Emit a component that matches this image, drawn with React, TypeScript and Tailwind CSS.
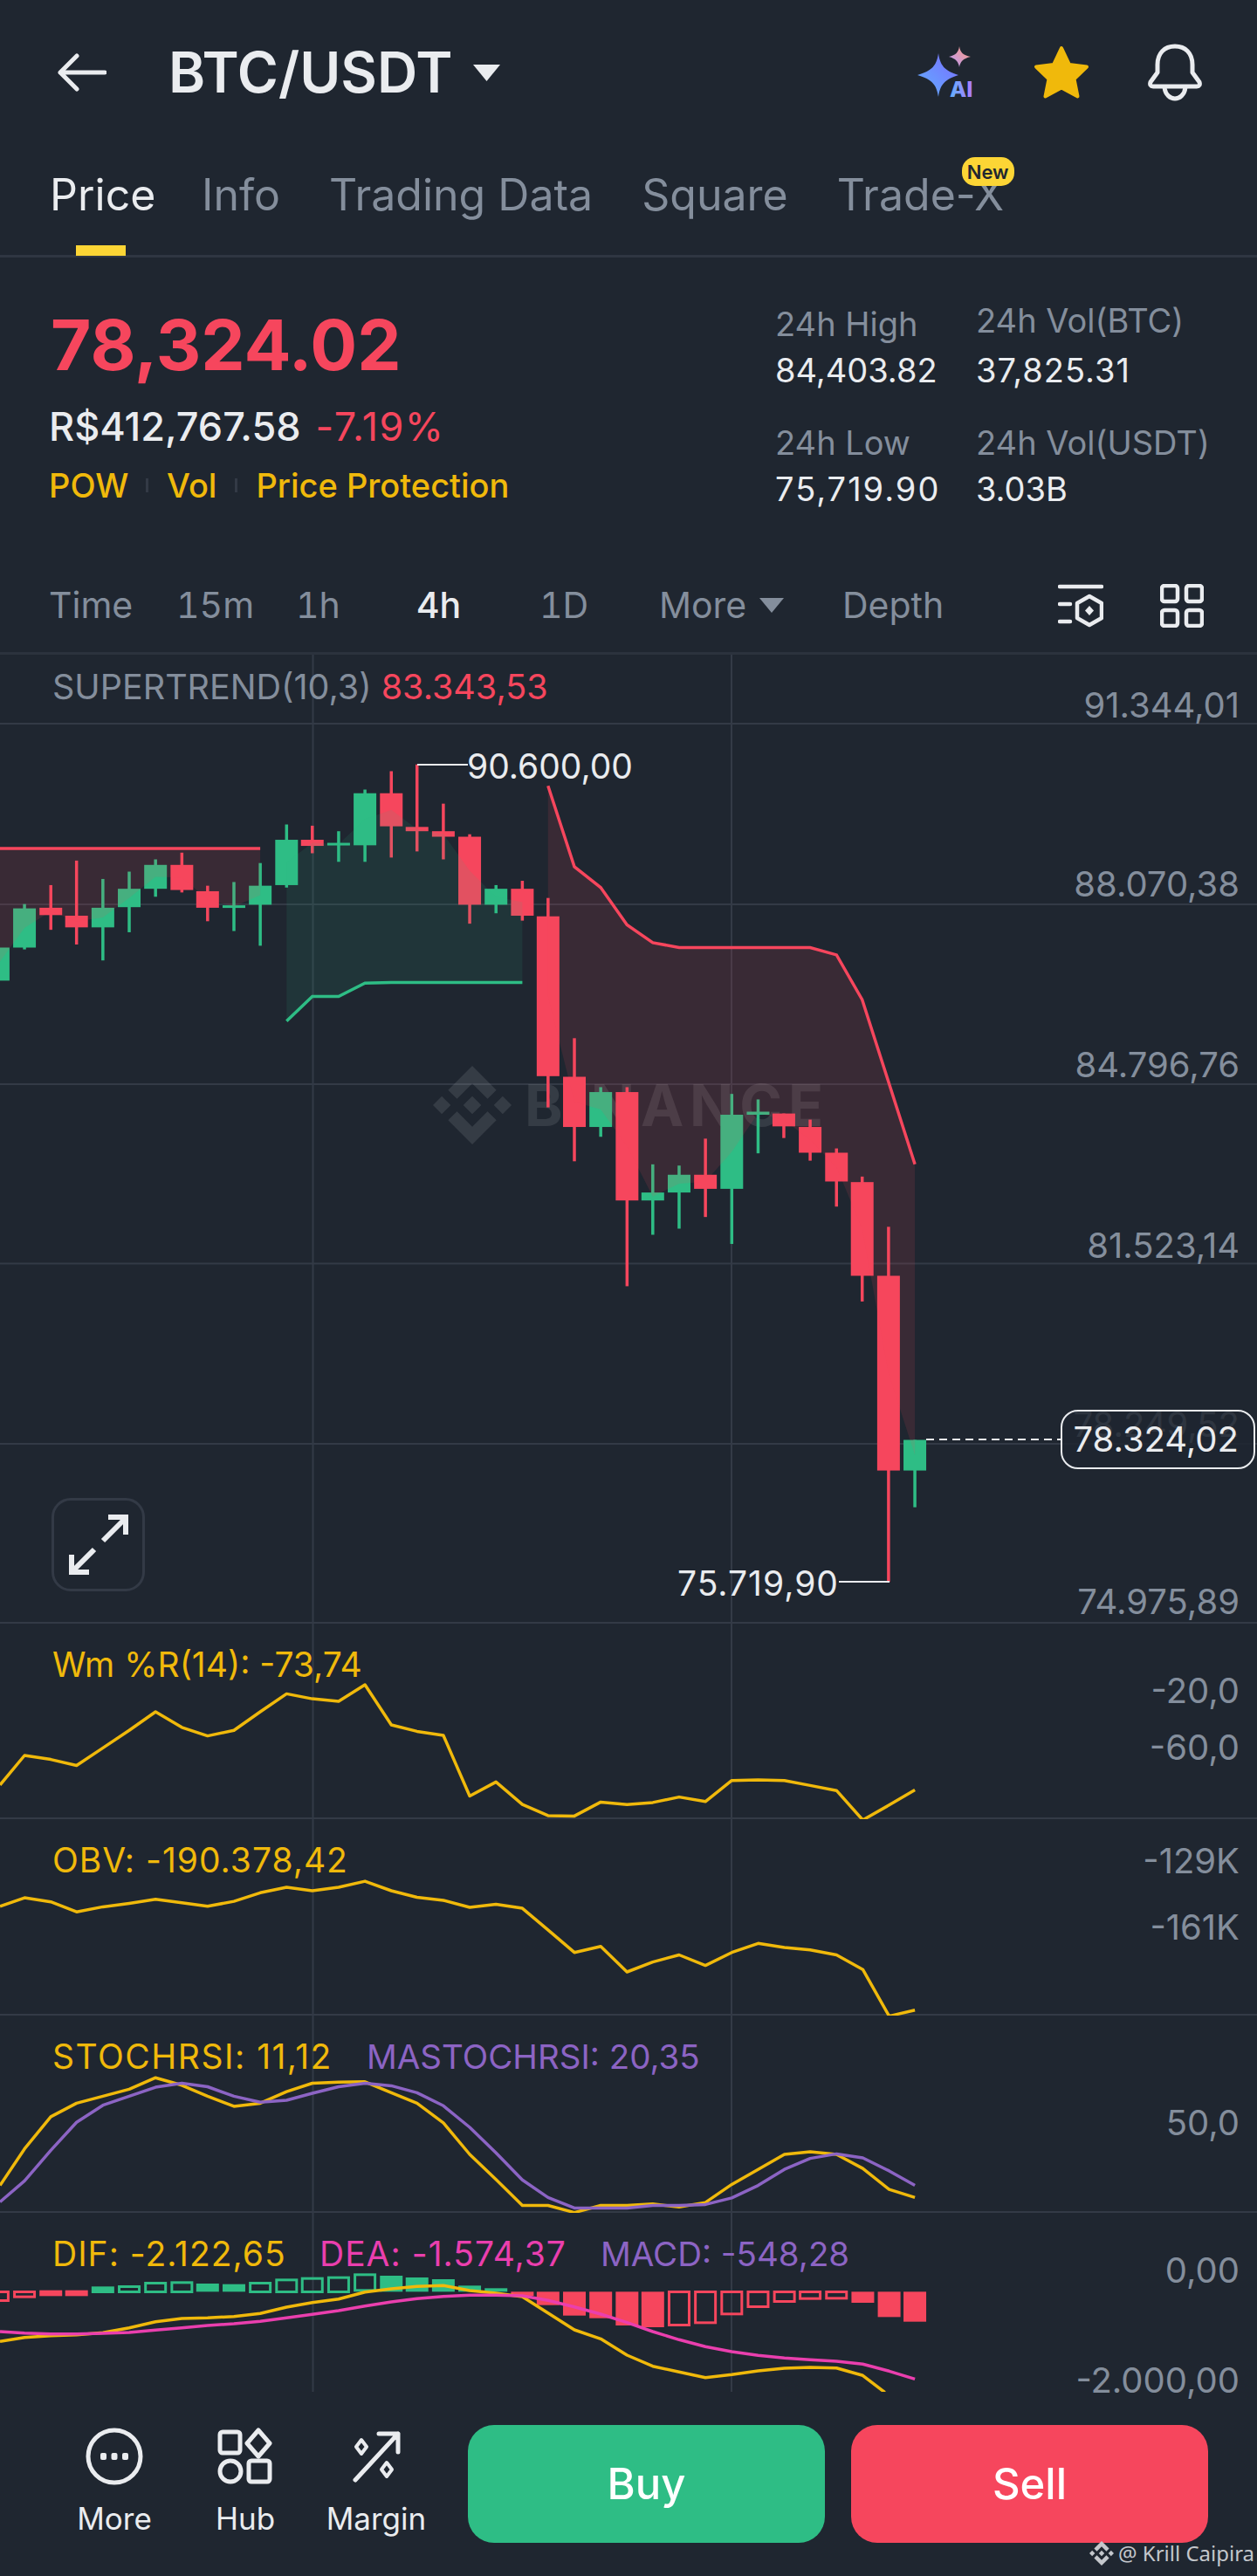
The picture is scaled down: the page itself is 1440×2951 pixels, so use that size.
import React from "react";

const GREEN = "#2ebd85";
const RED = "#f6465d";
const YELLOW = "#f0b90b";
const PURPLE = "#8c64c4";
const PINK = "#ea3fae";
const GRID = "#333a46";

const S = 1.4255;
const zx = (x: number) => x / S;
const zy = (y: number) => 10 + y / S;

// [centerX, wickTop, wickBottom, bodyTop, bodyBottom, green?]
const candles: [number, number, number, number, number, number][] = [
  [1494, 1268, 1378, 1268, 1318, 1],
  [1451, 920, 1500, 1000, 1318, 0],
  [1408, 838, 1042, 847, 1000, 0],
  [1366, 792, 887, 799, 846, 0],
  [1323, 745, 812, 757, 799, 0],
  [1280, 735, 775, 735, 756, 0],
  [1238, 712, 800, 732, 737, 1],
  [1195, 703, 948, 737, 858, 1],
  [1152, 776, 904, 835, 858, 0],
  [1109, 820, 923, 835, 864, 1],
  [1066, 818, 933, 864, 877, 1],
  [1024, 692, 1017, 700, 877, 0],
  [981, 692, 773, 700, 757, 1],
  [938, 612, 813, 675, 757, 0],
  [895, 383, 725, 413, 674, 0],
  [853, 355, 420, 368, 412, 0],
  [810, 362, 408, 368, 394, 1],
  [767, 279, 425, 283, 394, 0],
  [724, 229, 320, 274, 283, 0],
  [681, 165, 307, 267, 274, 0],
  [639, 176, 317, 212, 266, 0],
  [596, 206, 324, 212, 297, 1],
  [553, 274, 324, 293, 297, 1],
  [510, 265, 310, 288, 298, 0],
  [468, 263, 366, 288, 362, 1],
  [425, 326, 461, 363, 394, 1],
  [382, 357, 437, 395, 399, 1],
  [339, 363, 421, 372, 399, 0],
  [297, 309, 374, 329, 370, 0],
  [254, 320, 381, 329, 368, 1],
  [211, 340, 439, 368, 398, 1],
  [168, 352, 485, 399, 431, 1],
  [125, 322, 459, 412, 431, 0],
  [83, 362, 435, 399, 411, 0],
  [40, 393, 467, 400, 464, 1],
  [-3, 440, 533, 464, 518, 1],
];

const pts = (a: number[][], fx: (n: number) => number, fy: (n: number) => number) =>
  a.map(([x, y]) => `${fx(x).toFixed(1)},${fy(y).toFixed(1)}`).join(" ");

// The band closes on the midpoint of each candle body, from right-hand x down to left-hand x.
const mids = (from: number, to: number) =>
  candles.filter((c) => c[0] <= from && c[0] >= to).map((c) => [c[0], (c[3] + c[4]) / 2]);

const redLine1 = [[-3, 302], [425, 302]];
const greenLine = [[468, 584], [510, 544], [553, 544], [596, 522], [639, 521], [853, 521]];
const redLine2 = [[895, 200], [938, 332], [981, 366], [1024, 427], [1066, 456], [1109, 464], [1323, 464], [1366, 476], [1408, 549], [1494, 818]];
const redFill1 = [...redLine1, ...mids(425, -3)];
const greenFill = [...greenLine, ...mids(853, 468)];
const redFill2 = [...redLine2, ...mids(1494, 895)];

const wm = [[0,322],[40,263],[83,271],[125,283],[168,248],[211,213],[254,176],[297,207],[339,224],[382,213],[425,176],[468,140],[510,150],[553,155],[596,122],[639,202],[681,215],[724,223],[767,344],[810,316],[853,361],[895,383],[938,384],[981,356],[1024,361],[1066,357],[1109,346],[1152,355],[1195,313],[1238,312],[1281,313],[1323,323],[1366,333],[1409,392],[1452,362],[1494,332]];
const obv = [[0,565],[40,548],[83,556],[125,576],[168,566],[211,559],[254,551],[297,558],[339,565],[382,555],[425,538],[468,527],[510,534],[553,527],[596,515],[639,534],[681,547],[724,553],[767,567],[810,561],[853,569],[895,612],[938,657],[981,645],[1024,696],[1066,676],[1109,662],[1152,683],[1195,657],[1238,639],[1281,647],[1323,652],[1366,662],[1409,691],[1452,784],[1494,772]];
const stoch = [[0,1122],[40,1049],[83,985],[125,958],[168,944],[211,930],[254,907],[297,922],[339,944],[382,964],[425,958],[468,935],[510,918],[553,916],[596,915],[639,937],[681,958],[724,997],[767,1060],[810,1110],[853,1162],[895,1162],[938,1176],[981,1162],[1024,1162],[1066,1159],[1109,1165],[1152,1156],[1195,1120],[1238,1090],[1281,1060],[1323,1055],[1366,1060],[1409,1088],[1452,1130],[1494,1146]];
const maStoch = [[0,1155],[40,1113],[83,1052],[125,996],[168,962],[211,944],[254,926],[297,918],[339,925],[382,944],[425,956],[468,952],[510,938],[553,925],[596,918],[639,923],[681,937],[724,963],[767,1006],[810,1057],[853,1111],[895,1146],[938,1167],[981,1167],[1024,1167],[1066,1162],[1109,1162],[1152,1160],[1195,1147],[1238,1122],[1281,1090],[1323,1068],[1366,1059],[1409,1067],[1452,1093],[1494,1122]];
const dif = [[0,547],[40,533],[83,527],[125,524],[168,517],[211,500],[254,479],[297,468],[339,466],[382,461],[425,451],[468,429],[510,413],[553,401],[596,377],[639,366],[681,358],[724,355],[767,372],[810,381],[853,393],[895,449],[938,507],[981,538],[1024,594],[1066,632],[1109,652],[1152,671],[1195,661],[1238,648],[1281,639],[1323,636],[1366,638],[1409,664],[1445,722]];
const dea = [[0,513],[40,518],[83,521],[125,521],[168,519],[211,516],[254,508],[297,500],[339,492],[382,486],[425,478],[468,466],[510,454],[553,441],[596,425],[639,411],[681,400],[724,392],[767,388],[810,388],[853,390],[895,406],[938,428],[981,453],[1024,482],[1066,513],[1109,541],[1152,565],[1195,582],[1238,595],[1281,604],[1323,610],[1366,615],[1409,625],[1452,649],[1494,676]];
// x, top, bottom, green?, hollow?
const hist: [number, number, number, number, number][] = [
  [-3,372,411,0,1],[40,372,398,0,1],[83,371,391,0,0],[125,371,391,0,0],
  [168,358,381,1,0],[211,354,381,1,1],[254,342,381,1,1],[297,340,381,1,1],[339,348,376,1,0],[382,350,376,1,0],
  [425,342,381,1,1],[468,331,381,1,1],[510,326,381,1,1],[553,323,381,1,1],[596,313,376,1,1],[639,321,376,1,0],
  [681,327,376,1,0],[724,333,376,1,0],[767,355,376,1,0],[810,364,376,1,0],
  [853,376,390,0,0],[895,376,422,0,0],[938,376,458,0,0],[981,376,467,0,0],[1024,376,492,0,0],[1066,376,498,0,0],
  [1109,372,495,0,1],[1152,372,487,0,1],[1195,372,457,0,1],[1238,372,432,0,1],[1281,372,414,0,1],[1323,372,404,0,1],[1366,372,403,0,1],
  [1409,376,414,0,0],[1452,376,463,0,0],[1494,376,479,0,0],
];

const BnbPaths = () => (
  <>
    <path d="M38.73 53.2l24.59-24.58 24.6 24.6 14.3-14.31L63.32 0 24.42 38.9z" />
    <path d="M0 63.31l14.3-14.31 14.31 14.31-14.31 14.3z" />
    <path d="M38.73 73.41l24.59 24.59 24.6-24.6 14.31 14.29-38.9 38.91-38.91-38.88z" />
    <path d="M98 63.31l14.3-14.31 14.31 14.3-14.31 14.32z" />
    <path d="M77.83 63.3L63.32 48.78 52.59 59.51l-1.24 1.23-2.54 2.54 14.51 14.5 14.51-14.47z" />
  </>
);

const Axis = ({ y, children }: { y: string; children: React.ReactNode }) => (
  <div className={`absolute right-[20px] ${y} text-[40px] leading-[50px] text-[#848e9c]`}>{children}</div>
);

const VGrid = ({ h }: { h: number }) => (
  <>
    <line x1="358.5" x2="358.5" y1="0" y2={h} stroke={GRID} strokeWidth="2" />
    <line x1="838" x2="838" y1="0" y2={h} stroke={GRID} strokeWidth="2" />
  </>
);

const Line = ({ d, color, top, sy }: { d: number[][]; color: string; top: number; sy: number }) => (
  <polyline
    points={pts(d, (x) => x / S, (y) => y / sy - top)}
    fill="none"
    stroke={color}
    strokeWidth="3.5"
    strokeLinejoin="round"
  />
);

function MainChart() {
  const hy = [829, 1036, 1242, 1447.5, 1654];
  return (
    <div className="relative h-[1110px] border-b-[2px] border-[#333a46]">
      <svg className="absolute inset-0" width="1440" height="1110" viewBox="0 0 1440 1110">
        {hy.map((y) => (
          <line key={y} x1="0" x2="1440" y1={y - 750} y2={y - 750} stroke={GRID} strokeWidth="2" />
        ))}
        <VGrid h={1110} />
        <g fill="#ffffff" fillOpacity="0.1">
          <svg x="496" y="471" width="90" height="90" viewBox="0 0 126.61 126.61"><BnbPaths /></svg>
          <text x="601" y="540" fontFamily="Inter, sans-serif" fontWeight="700" fontSize="66" textLength="342">BINANCE</text>
        </g>
        {candles.map(([x, wt, wb, bt, bb, g]) => {
          const c = g ? GREEN : RED;
          return (
            <g key={x}>
              <rect x={zx(x) - 1.75} y={zy(wt)} width="3.5" height={(wb - wt) / S} fill={c} />
              <rect x={zx(x) - 13} y={zy(bt)} width="26" height={Math.max((bb - bt) / S, 3)} fill={c} />
            </g>
          );
        })}
        <polygon points={pts(redFill1, zx, zy)} fill={RED} fillOpacity="0.12" />
        <polygon points={pts(greenFill, zx, zy)} fill={GREEN} fillOpacity="0.1" />
        <polygon points={pts(redFill2, zx, zy)} fill={RED} fillOpacity="0.12" />
        <polyline points={pts(redLine1, zx, zy)} fill="none" stroke={RED} strokeWidth="3.5" />
        <polyline points={pts(greenLine, zx, zy)} fill="none" stroke={GREEN} strokeWidth="3.5" />
        <polyline points={pts(redLine2, zx, zy)} fill="none" stroke={RED} strokeWidth="3.5" />
        <polyline points="478,126 536,126" fill="none" stroke="#eaecef" strokeWidth="2" />
        <polyline points="961,1062 1019,1062" fill="none" stroke="#eaecef" strokeWidth="2" />
        <line x1="1061" x2="1216" y1="899" y2="899" stroke="#eaecef" strokeWidth="2" strokeDasharray="9 6" />
      </svg>

      <div className="relative px-[60px] pt-[12px] text-[39.5px] leading-[50px] text-[#848e9c]">
        SUPERTREND(10,3) <span className="text-[#f6465d]">83.343,53</span>
      </div>

      <Axis y="top-[33px]">91.344,01</Axis>
      <Axis y="top-[238px]">88.070,38</Axis>
      <Axis y="top-[445px]">84.796,76</Axis>
      <Axis y="top-[652px]">81.523,14</Axis>
      <Axis y="top-[857px]">78.249,52</Axis>
      <Axis y="top-[1060px]">74.975,89</Axis>

      <div className="absolute left-[535px] top-[103px] text-[39px] leading-[50px] text-[#eaecef]">90.600,00</div>
      <div className="absolute left-[776px] top-[1039px] text-[39px] leading-[50px] tracking-[1px] text-[#eaecef]">75.719,90</div>

      <div className="absolute left-[1215px] top-[865px] flex h-[68px] w-[223px] items-center justify-end rounded-[20px] border-[2px] border-[#eaecef] bg-[#1f2630]/85 pr-[17px] text-[40px] text-[#eaecef]">
        78.324,02
      </div>

      <div className="absolute left-[59px] top-[966px] flex h-[107px] w-[107px] items-center justify-center rounded-[22px] border-[3px] border-[#333a46]">
        <svg width="70" height="72" viewBox="0 0 70 72" fill="none" stroke="#eaecef" strokeWidth="6">
          <path d="M40 31 L66 5 M46 4 H66 V24" />
          <path d="M30 41 L4 67 M4 47 V67 H24" />
        </svg>
      </div>
    </div>
  );
}

function WmPane() {
  return (
    <div className="relative h-[224px] border-b-[2px] border-[#333a46]">
      <svg className="absolute inset-0" width="1440" height="224" viewBox="0 0 1440 224">
        <VGrid h={224} />
        <Line d={wm} color={YELLOW} top={0} sy={1.742} />
      </svg>
      <div className="relative px-[60px] pt-[22px] text-[39px] leading-[50px] text-[#f0b90b]">Wm %R(14): -73,74</div>
      <Axis y="top-[52px]">-20,0</Axis>
      <Axis y="top-[117px]">-60,0</Axis>
    </div>
  );
}

function ObvPane() {
  return (
    <div className="relative h-[225px] border-b-[2px] border-[#333a46]">
      <svg className="absolute inset-0" width="1440" height="225" viewBox="0 0 1440 225">
        <VGrid h={225} />
        <Line d={obv} color={YELLOW} top={224.5} sy={1.742} />
      </svg>
      <div className="relative px-[60px] pt-[22px] text-[39px] leading-[50px] tracking-[1px] text-[#f0b90b]">OBV: -190.378,42</div>
      <Axis y="top-[23px]">-129K</Axis>
      <Axis y="top-[99px]">-161K</Axis>
    </div>
  );
}

function StochPane() {
  return (
    <div className="relative h-[226px] border-b-[2px] border-[#333a46]">
      <svg className="absolute inset-0" width="1440" height="226" viewBox="0 0 1440 226">
        <VGrid h={226} />
        <Line d={stoch} color={YELLOW} top={449.5} sy={1.742} />
        <Line d={maStoch} color={PURPLE} top={449.5} sy={1.742} />
      </svg>
      <div className="relative flex px-[60px] pt-[22px] text-[39px] leading-[50px]">
        <span className="w-[360px] tracking-[1.5px] text-[#f0b90b]">STOCHRSI: 11,12</span>
        <span className="text-[38.5px] text-[#8c64c4]">MASTOCHRSI: 20,35</span>
      </div>
      <Axis y="top-[98px]">50,0</Axis>
    </div>
  );
}

function MacdPane() {
  const fy = (y: number) => y / 3 - 35;
  return (
    <div className="relative h-[205px]">
      <svg className="absolute inset-0" width="1440" height="205" viewBox="0 0 1440 205">
        <VGrid h={205} />
        {hist.map(([x, t, b, g, h]) => {
          const c = g ? GREEN : RED;
          return (
            <rect
              key={x}
              x={zx(x) - 13 + (h ? 1.5 : 0)}
              y={fy(t) + (h ? 1.5 : 0)}
              width={h ? 23 : 26}
              height={(b - t) / 3 - (h ? 3 : 0)}
              fill={h ? "none" : c}
              stroke={h ? c : "none"}
              strokeWidth={h ? 3 : 0}
            />
          );
        })}
        <polyline points={pts(dif, zx, fy)} fill="none" stroke={YELLOW} strokeWidth="3.5" strokeLinejoin="round" />
        <polyline points={pts(dea, zx, fy)} fill="none" stroke={PINK} strokeWidth="3.5" strokeLinejoin="round" />
      </svg>
      <div className="relative flex px-[60px] pt-[22px] text-[39px] leading-[50px]">
        <span className="w-[306px] tracking-[1px] text-[#f0b90b]">DIF: -2.122,65</span>
        <span className="w-[322px] tracking-[1px] text-[#ea3fae]">DEA: -1.574,37</span>
        <span className="text-[38.5px] text-[#8c64c4]">MACD: -548,28</span>
      </div>
      <Axis y="top-[41px]">0,00</Axis>
      <Axis y="top-[167px]">-2.000,00</Axis>
    </div>
  );
}

const NavItem = ({ label, children }: { label: string; children: React.ReactNode }) => (
  <div className="flex w-[150px] flex-col items-center">
    <div className="flex h-[72px] items-center justify-center">{children}</div>
    <div className="mt-[13px] text-[35px] leading-[44px] text-[#eaecef]">{label}</div>
  </div>
);

export default function App() {
  return (
    <div
      className="relative h-[2951px] w-[1440px] overflow-hidden bg-[#1f2630] text-[#eaecef]"
      style={{ fontFamily: "Inter, 'Liberation Sans', sans-serif" }}
    >
      {/* Header */}
      <div className="flex h-[166px] items-center pl-[66px] pr-[63px]">
        <svg width="56" height="44" viewBox="0 0 56 44" fill="none" stroke="#eaecef" strokeWidth="5" strokeLinecap="round" strokeLinejoin="round">
          <path d="M3 22 H54 M22 3 L3 22 L22 41" />
        </svg>
        <div className="ml-[71px] text-[64px] font-semibold leading-none text-[#eaecef]">BTC/USDT</div>
        <svg className="ml-[23px]" width="33" height="20" viewBox="0 0 33 20" fill="#eaecef">
          <path d="M1 1 H32 L16.5 20 Z" />
        </svg>
        <div className="ml-auto flex items-center">
          <svg width="66" height="60" viewBox="0 0 66 60">
            <defs>
              <linearGradient id="ai1" x1="0" y1="1" x2="1" y2="0">
                <stop offset="0" stopColor="#5fb0ff" />
                <stop offset="1" stopColor="#7b6cff" />
              </linearGradient>
              <linearGradient id="ai2" x1="0" y1="1" x2="1" y2="0">
                <stop offset="0" stopColor="#b59bff" />
                <stop offset="1" stopColor="#ff9a7a" />
              </linearGradient>
              <linearGradient id="ai3" x1="0" y1="0" x2="1" y2="0">
                <stop offset="0" stopColor="#5fb0ff" />
                <stop offset="1" stopColor="#b07bff" />
              </linearGradient>
            </defs>
            <path d="M25 8 C27 22 32 28 48 33 C32 38 27 44 25 58 C23 44 18 38 1 33 C18 28 23 22 25 8 Z" fill="url(#ai1)" />
            <path d="M49 0 C50 7 53 10 62 12 C53 14 50 18 49 24 C48 18 45 14 37 12 C45 10 48 7 49 0 Z" fill="url(#ai2)" />
            <text x="38" y="58" fontFamily="Inter, sans-serif" fontWeight="800" fontSize="25" fill="url(#ai3)">AI</text>
          </svg>
          <svg className="ml-[68px]" width="64" height="62" viewBox="0 0 64 62">
            <path d="M32 3 L41 22 L61 24.5 L46.5 38.5 L50.5 58.5 L32 48.5 L13.5 58.5 L17.5 38.5 L3 24.5 L23 22 Z" fill="#f0b90b" stroke="#f0b90b" strokeWidth="4" strokeLinejoin="round" />
          </svg>
          <svg className="ml-[67px]" width="62" height="66" viewBox="0 0 62 66" fill="none" stroke="#eaecef" strokeWidth="5" strokeLinejoin="round">
            <path d="M11 33 V24 C11 11 19 3 31 3 C43 3 51 11 51 24 V33 L59 44 C60 47 59 49 56 49 H6 C3 49 2 47 3 44 Z" />
            <path d="M19 50 C20 59 26 63 31 63 C36 63 42 59 43 50" />
          </svg>
        </div>
      </div>

      {/* Tabs */}
      <div className="relative flex h-[129px] gap-[56px] border-b-[3px] border-[#2f3642] pl-[57px] pt-[29px] text-[50px] leading-[56px] text-[#848e9c]">
        <div className="relative w-[118px] text-[#eaecef]">
          Price
          <div className="absolute left-[30px] top-[86px] h-[12px] w-[57px] bg-[#fcd535]" />
        </div>
        <div>Info</div>
        <div>Trading Data</div>
        <div>Square</div>
        <div className="relative">
          Trade-X
          <div className="absolute left-[143px] top-[-15px] flex h-[33px] w-[60px] items-center justify-center rounded-[15px] bg-[#fcd535] text-[22px] font-semibold leading-none text-[#202630]">
            New
          </div>
        </div>
      </div>

      {/* Stats */}
      <div className="flex h-[345px]">
        <div className="w-[888px] pl-[56px] pt-[50px]">
          <div className="ml-[2px] text-[80px] font-bold leading-[100px] text-[#f6465d]">78,324.02</div>
          <div className="mt-[14px] flex gap-[17px] text-[45px] leading-[60px]">
            <span className="font-medium text-[#eaecef]">R$412,767.58</span>
            <span className="tracking-[1.5px] text-[#f6465d]">-7.19%</span>
          </div>
          <div className="mt-[12px] flex items-center text-[38px] font-medium leading-[50px] text-[#f0b90b]">
            <span className="w-[90px]">POW</span>
            <span className="mx-[21px] h-[16px] w-[3px] bg-[#333a46]" />
            <span>Vol</span>
            <span className="mx-[21px] h-[16px] w-[3px] bg-[#333a46]" />
            <span>Price Protection</span>
          </div>
        </div>
        <div className="w-[230px] pt-[51px] text-[38px] leading-[50px]">
          <div className="text-[#848e9c]">24h High</div>
          <div className="mt-[3px] text-[#eaecef]">84,403.82</div>
          <div className="mt-[33px] text-[#848e9c]">24h Low</div>
          <div className="mt-[3px] tracking-[2px] text-[#eaecef]">75,719.90</div>
        </div>
        <div className="pt-[47px] text-[38px] leading-[50px]">
          <div className="text-[#848e9c]">24h Vol(BTC)</div>
          <div className="mt-[7px] tracking-[1px] text-[#eaecef]">37,825.31</div>
          <div className="mt-[33px] text-[#848e9c]">24h Vol(USDT)</div>
          <div className="mt-[3px] text-[#eaecef]">3.03B</div>
        </div>
      </div>

      {/* Timeframes */}
      <div className="flex h-[110px] items-center border-b-[3px] border-[#2b323d] pl-[56px] pr-[61px] text-[41px] tabular-nums text-[#848e9c]">
        <div className="w-[146px]">Time</div>
        <div className="w-[137px]">15m</div>
        <div className="w-[138px]">1h</div>
        <div className="w-[141px] font-medium text-[#eaecef]">4h</div>
        <div className="w-[137px]">1D</div>
        <div className="flex w-[210px] items-center">
          More
          <svg className="ml-[15px]" width="28" height="17" viewBox="0 0 28 17" fill="#848e9c">
            <path d="M0 0 H28 L14 17 Z" />
          </svg>
        </div>
        <div>Depth</div>
        <div className="ml-auto flex items-center">
          <svg width="52" height="50" viewBox="0 0 52 50" fill="none" stroke="#eaecef" strokeWidth="4.5" strokeLinecap="round" strokeLinejoin="round">
            <path d="M2 3 H50 M2 23 H14 M2 43 H14" />
            <path d="M36 14 L50 22 V39 L36 47 L22 39 V22 Z" />
            <path d="M36 25 L41 30.5 L36 36 L31 30.5 Z" fill="#eaecef" stroke="none" />
          </svg>
          <svg className="ml-[65px]" width="50" height="50" viewBox="0 0 50 50" fill="none" stroke="#eaecef" strokeWidth="4.5">
            <rect x="2" y="2" width="18" height="18" rx="3" />
            <rect x="30" y="2" width="18" height="18" rx="3" />
            <rect x="2" y="30" width="18" height="18" rx="3" />
            <rect x="30" y="30" width="18" height="18" rx="3" />
          </svg>
        </div>
      </div>

      <MainChart />
      <WmPane />
      <ObvPane />
      <StochPane />
      <MacdPane />

      {/* Bottom bar */}
      <div className="flex pl-[56px] pt-[38px]">
        <NavItem label="More">
          <svg width="66" height="66" viewBox="0 0 66 66" fill="none" stroke="#eaecef" strokeWidth="5">
            <circle cx="33" cy="33" r="30" />
            <rect x="17" y="29" width="7" height="8" rx="2" fill="#eaecef" stroke="none" />
            <rect x="29.5" y="29" width="7" height="8" rx="2" fill="#eaecef" stroke="none" />
            <rect x="42" y="29" width="7" height="8" rx="2" fill="#eaecef" stroke="none" />
          </svg>
        </NavItem>
        <NavItem label="Hub">
          <svg width="64" height="66" viewBox="0 0 64 66" fill="none" stroke="#eaecef" strokeWidth="5" strokeLinejoin="round">
            <rect x="3" y="5" width="23" height="24" rx="3" />
            <path d="M47 3 L60 18 L47 33 L34 18 Z" />
            <circle cx="15" cy="50" r="12" />
            <rect x="36" y="38" width="24" height="24" rx="3" />
          </svg>
        </NavItem>
        <NavItem label="Margin">
          <svg width="60" height="60" viewBox="0 0 60 60" fill="none" stroke="#eaecef" strokeWidth="5" strokeLinejoin="round" strokeLinecap="round">
            <path d="M6 57 L55 4 M33 4 H55 V25" />
            <path d="M13 11 L19 19 L13 27 L7 19 Z" strokeWidth="4" />
            <path d="M42 37 L48 45 L42 53 L36 45 Z" strokeWidth="4" />
          </svg>
        </NavItem>
        <div className="ml-[30px] flex h-[135px] w-[409px] items-center justify-center rounded-[30px] bg-[#2ebd85] text-[49px] font-medium text-white">Buy</div>
        <div className="ml-[30px] flex h-[135px] w-[409px] items-center justify-center rounded-[30px] bg-[#f6465d] text-[49px] font-medium text-white">Sell</div>
      </div>

      {/* Attribution */}
      <div className="absolute left-[1247px] top-[2911px] flex items-center gap-[4px] text-[24px] leading-[28px] text-[#c4c7cc]" style={{ fontFamily: "'Noto Sans', sans-serif" }}>
        <svg width="30" height="28" viewBox="0 0 126.61 126.61" fill="#c4c7cc"><BnbPaths /></svg>
        <span>@ Krill Caipira</span>
      </div>
    </div>
  );
}
